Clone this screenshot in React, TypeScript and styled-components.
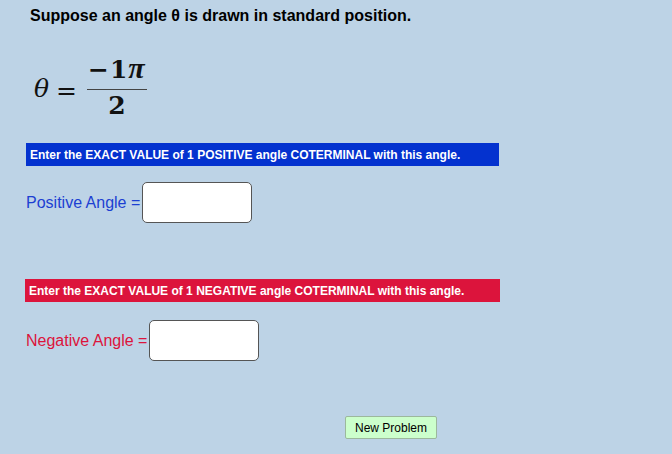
import React from "react";
import styled, { createGlobalStyle } from "styled-components";

const GlobalStyle = createGlobalStyle`
  html, body {
    margin: 0;
    padding: 0;
    background: #bdd3e6;
  }
  body {
    font-family: "Liberation Sans", Arial, sans-serif;
  }
`;

const Page = styled.div`
  width: 672px;
  height: 454px;
  overflow: hidden;
  display: flex;
  flex-direction: column;
  padding: 7px 0 0 0;
  box-sizing: border-box;
`;

const Title = styled.div`
  margin-left: 30px;
  font-size: 16px;
  line-height: 18px;
  font-weight: 700;
  color: #000;
`;

const MathRow = styled.div`
  display: flex;
  align-items: center;
  margin: 31px 0 0 34px;
  font-family: "DejaVu Serif", "Liberation Serif", serif;
  font-size: 25px;
  color: #111;
  height: 62px;
`;

const Theta = styled.span`
  font-style: italic;
  margin-top: 2px;
`;

const Equals = styled.span`
  margin: 6px 10px 0 7px;
`;

const Fraction = styled.span`
  display: inline-flex;
  flex-direction: column;
  align-items: center;
  font-weight: 700;
`;

const Numerator = styled.span`
  line-height: 26px;
  padding: 0 1px 6px;
  letter-spacing: 1px;
`;

const Pi = styled.span`
  font-family: "Liberation Serif", serif;
  font-style: italic;
  font-size: 30px;
  line-height: 26px;
`;

const Denominator = styled.span`
  line-height: 26px;
  border-top: 1px solid #444;
  align-self: stretch;
  text-align: center;
  padding-top: 3px;
`;

const Banner = styled.div<{ $bg: string; $left: number; $width: number; $top: number }>`
  margin: ${(p) => p.$top}px 0 0 ${(p) => p.$left}px;
  width: ${(p) => p.$width}px;
  height: 23px;
  background: ${(p) => p.$bg};
  color: #fff;
  font-size: 12px;
  font-weight: 700;
  display: flex;
  align-items: center;
  padding-left: 4px;
  box-sizing: border-box;
`;

const AnswerRow = styled.label<{ $color: string; $top: number }>`
  display: flex;
  align-items: center;
  margin: ${(p) => p.$top}px 0 0 26px;
  color: ${(p) => p.$color};
  font-size: 16px;
`;

const AnswerBox = styled.input`
  width: 110px;
  height: 41px;
  margin-left: 2px;
  box-sizing: border-box;
  border: 1px solid #555;
  border-radius: 5px;
  background: #fff;
  outline: none;
  font-size: 16px;
`;

const Footer = styled.div`
  display: flex;
  margin: 55px 0 0 345px;
`;

const NewProblemButton = styled.button`
  width: 92px;
  height: 23px;
  background: #ccffcc;
  border: 1px solid #9cb89c;
  border-radius: 2px;
  font-family: "Liberation Sans", Arial, sans-serif;
  font-size: 12px;
  color: #000;
  padding: 0;
  cursor: pointer;
`;

export default function App() {
  return (
    <>
      <GlobalStyle />
      <Page>
        <Title>Suppose an angle θ is drawn in standard position.</Title>

        <MathRow>
          <Theta>θ</Theta>
          <Equals>=</Equals>
          <Fraction>
            <Numerator>
              −1<Pi>π</Pi>
            </Numerator>
            <Denominator>2</Denominator>
          </Fraction>
        </MathRow>

        <Banner $bg="#0432cf" $left={26} $width={473} $top={25}>
          Enter the EXACT VALUE of 1 POSITIVE angle COTERMINAL with this angle.
        </Banner>
        <AnswerRow $color="#1c3fd2" $top={16}>
          Positive Angle =
          <AnswerBox type="text" />
        </AnswerRow>

        <Banner $bg="#dc143c" $left={25} $width={475} $top={56}>
          Enter the EXACT VALUE of 1 NEGATIVE angle COTERMINAL with this angle.
        </Banner>
        <AnswerRow $color="#dc143c" $top={18}>
          Negative Angle =
          <AnswerBox type="text" />
        </AnswerRow>

        <Footer>
          <NewProblemButton>New Problem</NewProblemButton>
        </Footer>
      </Page>
    </>
  );
}
